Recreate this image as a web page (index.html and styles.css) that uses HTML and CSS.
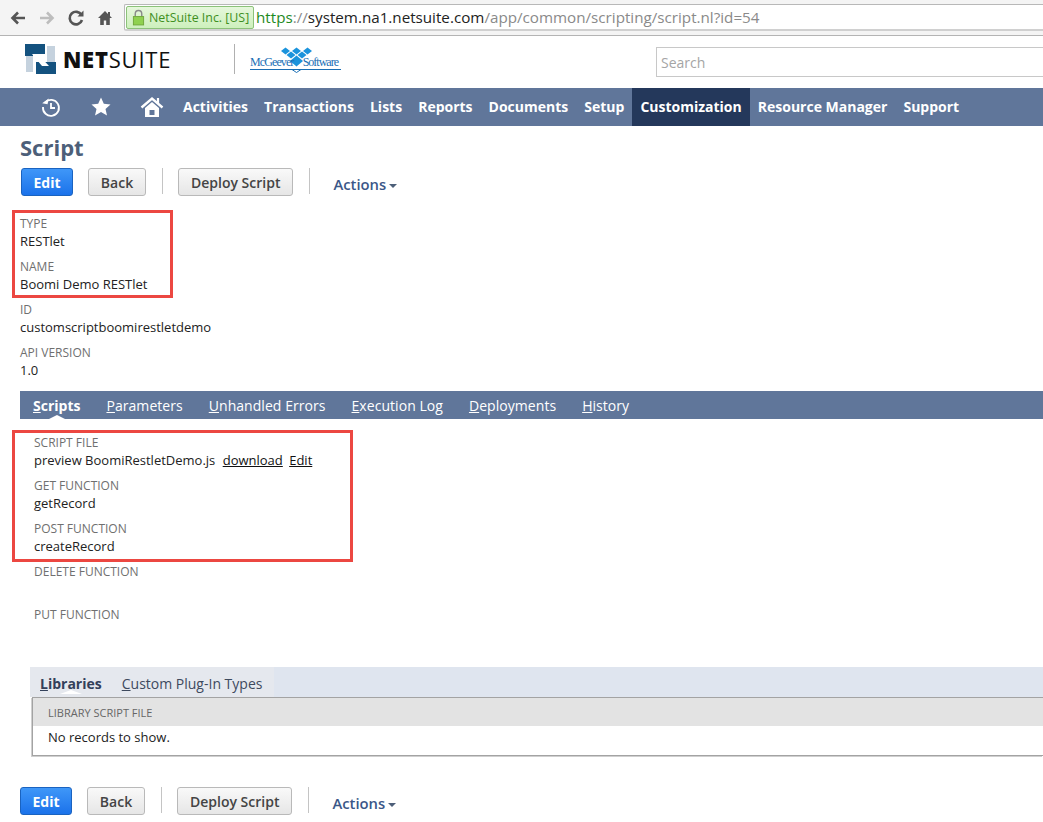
FILE: index.html
```html
<!DOCTYPE html>
<html lang="en">
<head>
<meta charset="utf-8">
<title>Script - NetSuite</title>
<link rel="stylesheet" href="styles.css">
</head>
<body>
<div class="browser">
  <div class="browser-icons">
    <svg class="bi" viewBox="0 0 18 18"><path d="M16 9H4M9 3.500L3.500 9 9 14.500" fill="none" stroke="#555" stroke-width="2.600"/></svg>
    <svg class="bi" viewBox="0 0 18 18"><path d="M2 9h12M9 3.500L14.500 9 9 14.500" fill="none" stroke="#bdbdbd" stroke-width="2.600"/></svg>
    <svg class="bi" viewBox="0 0 18 18"><path d="M14.500 6A6.300 6.300 0 1 0 15 11" fill="none" stroke="#555" stroke-width="2.600"/><path d="M10.500 7.500h6v-6z" fill="#555"/></svg>
    <svg class="bi" viewBox="0 0 18 18"><path d="M9 2L2 9h2.200v7h3.600v-4.500h2.400V16h3.600V9H16l-2-2V3h-2v2z" fill="#555"/></svg>
  </div>
  <div class="omnibox">
    <div class="ev">
      <svg class="lock" viewBox="0 0 14 18"><path d="M3.500 8V5a3.500 3.500 0 0 1 7 0v3" fill="none" stroke="#8a8a8a" stroke-width="1.500"/><rect x="1.500" y="8" width="11" height="9" fill="#8fd14f" stroke="#6fa63a"/></svg>
      <span>NetSuite Inc. [US]</span>
    </div>
    <div class="url"><span class="https">https</span><span class="sep">://</span><span class="host">system.na1.netsuite.com</span><span class="sep">/app/common/scripting/script.nl?id=54</span></div>
  </div>
</div>

<header class="masthead">
  <div class="ns-logo">
    <svg class="ns-mark" viewBox="0 0 31 30">
      <rect x="0" y="0" width="31" height="30" fill="#fff"/>
      <path d="M1 12h7v16H1z" fill="#c5d2de"/>
      <path d="M22 2h8v16h-8z" fill="#c5d2de"/>
      <path d="M0 0h20v10h-12v2H0z" fill="#14527f"/>
      <path d="M11 18h20v12H11z" fill="#14527f"/>
      <path d="M7 10h6l11 12h-7z" fill="#fff"/>
    </svg>
    <span class="ns-word"><b>NET</b>SUITE</span>
  </div>
  <div class="logo-rule"></div>
  <div class="mc-logo">
    <svg class="mc-mark" viewBox="0 0 31 27">
      <g fill="#1b93dc">
        <path d="M4.500 0.500l4.500 3.500-4.500 3.500L0 4z"/><path d="M15.500 0.500l4.500 3.500-4.500 3.500-4.500-3.500z"/><path d="M26.500 0.500l4.500 3.500-4.500 3.500-4.500-3.500z"/>
        <path d="M10 4.500l4.500 3.500-4.500 3.500-4.500-3.500z"/><path d="M21 4.500l4.500 3.500-4.500 3.500-4.500-3.500z"/>
        <path d="M15.500 8.500l6.500 5.500-6.500 5.500-6.500-5.500z"/>
      </g>
      <path d="M11 22.500l4.500 3 4.500-3" fill="none" stroke="#1a6fb5"/>
    </svg>
    <div class="mc-text"><span>McGeever</span><span class="mc-soft">Software</span></div>
  </div>
  <div class="search">Search</div>
</header>

<nav class="mainnav">
  <span class="nav-icon">
    <svg viewBox="0 0 22 22"><path d="M5 6.500A8 8 0 1 1 3 11" fill="none" stroke="#fff" stroke-width="1.800"/><path d="M8 2v6H2.500z" fill="#fff" transform="rotate(12 6 6)"/><path d="M11 7v5h4" fill="none" stroke="#fff" stroke-width="1.800"/></svg>
  </span>
  <span class="nav-icon">
    <svg viewBox="0 0 22 22"><path d="M11 1.500l2.800 6.300 6.700.6-5 4.500 1.500 6.700-6-3.500-6 3.500 1.500-6.700-5-4.500 6.700-.6z" fill="#fff"/></svg>
  </span>
  <span class="nav-icon home">
    <svg viewBox="0 0 24 22"><path d="M1.500 11.500L12 2.500l10.500 9" fill="none" stroke="#fff" stroke-width="2.400"/><path d="M18 2v5" stroke="#fff" stroke-width="2.200"/><path d="M5 12v9h14v-9L12 6z M9.500 14h5v5h-5z" fill="#fff" fill-rule="evenodd"/></svg>
  </span>
  <a class="nav-item">Activities</a>
  <a class="nav-item">Transactions</a>
  <a class="nav-item">Lists</a>
  <a class="nav-item">Reports</a>
  <a class="nav-item">Documents</a>
  <a class="nav-item">Setup</a>
  <a class="nav-item active">Customization</a>
  <a class="nav-item">Resource Manager</a>
  <a class="nav-item">Support</a>
</nav>

<main class="page">
  <h1 class="title">Script</h1>
  <div class="actions">
    <button class="btn primary">Edit</button>
    <button class="btn back">Back</button>
    <span class="vrule"></span>
    <button class="btn">Deploy Script</button>
    <span class="vrule"></span>
    <span class="menu">Actions<i class="caret"></i></span>
  </div>

  <section class="fields top">
    <div class="field"><div class="lab">TYPE</div><div class="val">RESTlet</div></div>
    <div class="field"><div class="lab">NAME</div><div class="val">Boomi Demo RESTlet</div></div>
    <div class="field"><div class="lab">ID</div><div class="val">customscriptboomirestletdemo</div></div>
    <div class="field"><div class="lab">API VERSION</div><div class="val">1.0</div></div>
    <div class="redbox box-a"></div>
  </section>

  <div class="tabs">
    <a class="tab on"><u>S</u>cripts</a>
    <a class="tab"><u>P</u>arameters</a>
    <a class="tab"><u>U</u>nhandled Errors</a>
    <a class="tab"><u>E</u>xecution Log</a>
    <a class="tab"><u>D</u>eployments</a>
    <a class="tab"><u>H</u>istory</a>
  </div>

  <section class="fields sub">
    <div class="field"><div class="lab">SCRIPT FILE</div><div class="val">preview BoomiRestletDemo.js <a class="lnk first">download</a> <a class="lnk">Edit</a></div></div>
    <div class="field"><div class="lab">GET FUNCTION</div><div class="val">getRecord</div></div>
    <div class="field"><div class="lab">POST FUNCTION</div><div class="val">createRecord</div></div>
    <div class="field"><div class="lab">DELETE FUNCTION</div><div class="val">&nbsp;</div></div>
    <div class="field"><div class="lab">PUT FUNCTION</div><div class="val">&nbsp;</div></div>
    <div class="redbox box-b"></div>
  </section>

  <section class="lib">
    <div class="lib-tabs">
      <div class="lib-tabs-group">
        <a class="lib-tab on"><u>L</u>ibraries</a>
        <a class="lib-tab"><u>C</u>ustom Plug-In Types</a>
      </div>
    </div>
    <div class="lib-box">
      <div class="lib-head">LIBRARY SCRIPT FILE</div>
      <div class="lib-row">No records to show.</div>
    </div>
  </section>

  <div class="actions bottom">
    <button class="btn primary">Edit</button>
    <button class="btn back">Back</button>
    <span class="vrule"></span>
    <button class="btn">Deploy Script</button>
    <span class="vrule"></span>
    <span class="menu">Actions<i class="caret"></i></span>
  </div>
</main>
</body>
</html>
```
FILE: styles.css
```css
* { box-sizing: border-box; }
html, body { margin: 0; padding: 0; overflow: hidden; height: 822px; background: #fff; }
body { font-family: "Open Sans", "Liberation Sans", sans-serif; font-size: 13px; color: #222; }

.browser { height: 36px; background: #f4f4f4; border-bottom: 1px solid #b4b4b4; display: flex; padding: 4px 0 0 9px; }
.browser-icons { display: flex; gap: 11px; padding-top: 5px; width: 115px; }
.bi { width: 18px; height: 18px; }
.omnibox { flex: 1; height: 27px; background: #fff; border: 1px solid #b8b8b8; border-right: 0; border-bottom: 2px solid #d0d0d0; display: flex; align-items: center; border-radius: 2px 0 0 2px; }
.ev { height: 23px; width: 128px; margin-left: 1px; flex: none; background: linear-gradient(#e6f7dc, #cdf0bc); border: 1px solid #8cc27a; border-radius: 2px; display: flex; align-items: center; padding-left: 5px; gap: 4px; color: #3f8f1f; font-size: 12.400px; white-space: nowrap; }
.lock { width: 13px; height: 17px; flex: none; }
.url { font-size: 15.200px; margin-left: 2px; white-space: nowrap; color: #8a8a8a; }
.https { color: #1e8a1e; }
.host { color: #222; }

.masthead { height: 52px; display: flex; align-items: flex-start; position: relative; }
.ns-logo { display: flex; align-items: center; margin: 8px 0 0 25px; width: 185px; height: 30px; gap: 7px; }
.ns-mark { width: 31px; height: 30px; flex: none; }
.ns-word { font-size: 22px; color: #111; letter-spacing: 0.035em; white-space: nowrap; line-height: 30px; }
.ns-word b { font-weight: 800; }
.logo-rule { width: 1px; height: 30px; background: #b0b0b0; margin: 8px 15px 0 24px; }
.mc-logo { width: 91px; margin-top: 12px; position: relative; height: 26px; }
.mc-mark { width: 31px; height: 27px; position: absolute; left: 31px; top: -1px; }
.mc-text { display: flex; justify-content: space-between; font-family: "Liberation Serif", serif; font-weight: 400; font-size: 12px; letter-spacing: -0.900px; color: #1a6fb5; border-bottom: 1px solid #1a6fb5; position: absolute; left: 0; right: 0; top: 7px; line-height: 14px; }
.mc-soft { letter-spacing: -1px; margin-right: 3px; }
.search { position: absolute; left: 656px; right: 0; top: 11px; height: 30px; border: 1px solid #c8c8c8; border-right: 0; padding-left: 4px; line-height: 29px; font-size: 14px; color: #a5a5a5; }

.mainnav { height: 38px; background: #60769a; display: flex; align-items: stretch; padding-left: 40px; color: #fff; }
.nav-icon { width: 22px; margin-right: 28px; display: flex; align-items: center; }
.nav-icon svg { width: 22px; height: 22px; }
.nav-icon.home { margin-right: 11px; width: 24px; }
.nav-icon.home svg { width: 24px; height: 22px; }
.nav-item { font-size: 14px; font-weight: 700; padding: 0 8px; line-height: 38px; white-space: nowrap; }
.nav-item.active { background: #24385b; }

.page { padding: 0; }
.title { margin: 7px 0 0 20px; font-size: 22px; line-height: 28px; font-weight: 700; color: #4d5f79; }
.actions { display: flex; align-items: flex-start; margin: 7px 0 0 21px; height: 32px; }
.btn { height: 28px; border: 1px solid #b9b9b9; border-radius: 3px; background: linear-gradient(#f9f9f9, #e6e6e6); font-family: inherit; font-size: 14px; font-weight: 600; color: #444; padding: 0 12px; white-space: nowrap; }
.btn.primary { width: 52px; padding: 0; border-color: #1a63c0; background: linear-gradient(#3f97f8, #1b72ea); color: #fff; font-weight: 700; margin-right: 15px; }
.btn.back { width: 58px; padding: 0; }
.vrule { width: 1px; height: 26px; background: #c4c4c4; margin: 0 15px 0 16px; }
.menu { font-size: 14.800px; font-weight: 600; color: #3b5788; margin: 6px 0 0 8px; line-height: 20px; white-space: nowrap; }
.caret { display: inline-block; width: 0; height: 0; border: 4px solid transparent; border-top: 4px solid #4d5f79; border-bottom: 0; margin-left: 3px; vertical-align: 2px; }

.fields { position: relative; }
.fields.top { margin: 15px 0 0 20px; height: 176px; }
.field { height: 43px; }
.lab { font-size: 12px; line-height: 18px; color: #6f6f6f; }
.val { font-size: 13px; line-height: 18px; margin-top: -1px; color: #222; white-space: nowrap; }
.lnk { text-decoration: underline; color: #111; margin-left: 3px; }
.lnk.first { margin-left: 4px; }
.redbox { position: absolute; border: 3px solid #ec4741; pointer-events: none; }
.box-a { left: -8px; top: -5px; width: 161px; height: 88px; }
.box-b { left: -22px; top: -4px; width: 341px; height: 132px; }

.tabs { margin-left: 20px; height: 28px; background: #60769a; display: flex; padding-left: 13px; gap: 26px; position: relative; }
.tab { font-size: 14px; line-height: 29px; color: #fff; white-space: nowrap; position: relative; letter-spacing: 0.050px; }
.tab.on { font-weight: 700; letter-spacing: 0; }
.tab.on::after { content: ""; position: absolute; left: 50%; bottom: 0; margin-left: -8px; border: 8px solid transparent; border-top: 0; border-bottom: 4px solid #fff; }

.fields.sub { margin: 15px 0 0 34px; height: 233px; }

.lib { margin-left: 30px; }
.lib-tabs { height: 30px; background: #dfe5ef; }
.lib-tabs-group { width: 244px; height: 30px; background: #e5e8ee; display: flex; padding-left: 10px; gap: 20px; }
.lib-tab { font-size: 14px; line-height: 34px; color: #3e4a5e; white-space: nowrap; position: relative; }
.lib-tab.on { font-weight: 700; color: #33405a; }
.lib-tab.on::after { content: ""; position: absolute; left: 50%; bottom: 3px; margin-left: -11px; border: 11px solid transparent; border-top: 0; border-bottom: 4px solid #fff; }
.lib-box { margin-left: 2px; height: 59px; border: 1px solid #a3a3a3; border-right: 0; box-shadow: -1px 1px 0 #cfcfcf; position: relative; padding-top: 0; }
.lib-head { height: 28px; background: #e3e3e3; font-size: 11px; line-height: 30px; padding-left: 15px; color: #666; }
.lib-row { padding-left: 15px; font-size: 13px; line-height: 23px; color: #222; }

.actions.bottom { margin: 31px 0 0 20px; }
```
